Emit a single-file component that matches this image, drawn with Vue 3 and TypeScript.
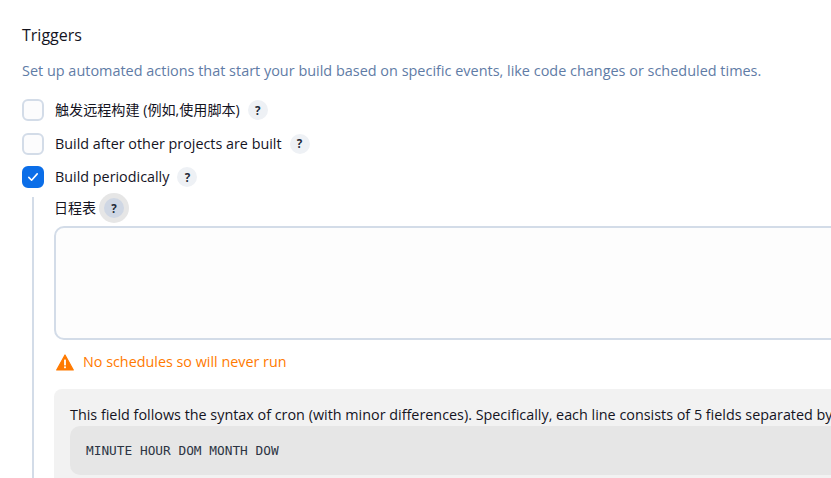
<script setup lang="ts">
const options = [
  { label: '触发远程构建 (例如,使用脚本)', checked: false, cjk: true },
  { label: 'Build after other projects are built', checked: false, cjk: false },
  { label: 'Build periodically', checked: true, cjk: false },
]
</script>

<template>
  <main class="page">
    <h2 class="title">Triggers</h2>
    <p class="desc">Set up automated actions that start your build based on specific events, like code changes or scheduled times.</p>
    <div class="options">
      <div v-for="o in options" :key="o.label" class="row">
        <span class="box" :class="{ on: o.checked }">
          <svg v-if="o.checked" width="12" height="12" viewBox="0 0 12 12"><path d="M1.8 6.4 4.6 9.2 10.2 2.9" fill="none" stroke="#fff" stroke-width="1.6" stroke-linecap="round" stroke-linejoin="round"/></svg>
        </span>
        <span class="label" :class="{ cjk: o.cjk }">{{ o.label }}</span>
        <span class="help">?</span>
      </div>
    </div>
    <section class="nested">
      <div class="field-label">
        <span class="cjk">日程表</span>
        <span class="help active">?</span>
      </div>
      <div class="textarea"></div>
      <div class="warning">
        <svg width="18" height="17" viewBox="0 0 18 17"><path d="M9 1 17.3 16H.7Z" fill="#ff7a00" stroke="#ff7a00" stroke-width="1.2" stroke-linejoin="round"/><rect x="8.1" y="5.6" width="1.8" height="5.8" fill="#fff"/><rect x="8.1" y="12.4" width="1.8" height="1.8" fill="#fff"/></svg>
        <span class="warning-text">No schedules so will never run</span>
      </div>
      <div class="info">
        <div class="info-text">This field follows the syntax of cron (with minor differences). Specifically, each line consists of 5 fields separated by</div>
        <pre class="code">MINUTE HOUR DOM MONTH DOW</pre>
      </div>
    </section>
  </main>
</template>

<style>
html, body { margin: 0; background: #fff; overflow: hidden; }
</style>

<style scoped>
.page {
  width: 831px;
  height: 478px;
  overflow: hidden;
  box-sizing: border-box;
  padding: 25px 0 0 22px;
  font-family: "Open Sans", "Noto Sans CJK SC", sans-serif;
  font-size: 14.35px;
  color: #14141f;
}
.title { margin: 0; font-size: 16px; font-weight: 400; line-height: 20px; }
.desc { margin: 16px 0 0; font-size: 14.45px; line-height: 20px; color: #5f7ca6; white-space: nowrap; }
.options { margin-top: 18px; display: flex; flex-direction: column; gap: 11.5px; }
.row { display: flex; align-items: center; height: 22px; }
.box {
  width: 22px; height: 22px; box-sizing: border-box;
  border: 2px solid #d3dce8; border-radius: 6px; background: #fcfcfd;
  display: flex; align-items: center; justify-content: center;
}
.box.on { background: #0b6ee8; border-color: #0b6ee8; }
.label { margin-left: 11px; padding-bottom: 1px; }
.cjk { font-size: 14px; padding-bottom: 3px; }
.label.cjk { font-size: 14.1px; padding-bottom: 3px; }
.help {
  margin-left: 8px; width: 20px; height: 20px; border-radius: 50%;
  background: #eef1f5; color: #222a38; font-size: 11.5px; font-weight: 700;
  display: flex; align-items: center; justify-content: center; flex: none;
}
.help.active { margin-left: 8px; background: #cfd7e4; box-shadow: 0 0 0 5px #e6e6e6; }
.nested {
  margin: 9px 0 0 10px; padding: 1px 0 0 20px;
  border-left: 2px solid #d3dce8;
  width: 900px; height: 400px;
}
.field-label { display: flex; align-items: center; height: 20px; }
.textarea {
  margin-top: 8px; height: 114px; box-sizing: border-box;
  border: 2px solid #d3dce8; border-radius: 10px; background: #fdfdfd;
}
.warning { margin-top: 12px; height: 20px; display: flex; align-items: center; gap: 9px; color: #ff7a00; padding-left: 2px; }
.warning-text { padding-bottom: 2px; }
.info { margin-top: 17px; padding: 16px; background: #f2f2f2; border-radius: 8px; }
.info-text { font-size: 14.37px; line-height: 20px; white-space: nowrap; }
.code {
  margin: 1px 0 0; height: 49px; box-sizing: border-box; padding: 0 16px;
  display: flex; align-items: center;
  background: #e6e6e6; border-radius: 10px;
  font-family: "DejaVu Sans Mono", monospace; font-size: 12.8px; color: #2c3443;
}
</style>
